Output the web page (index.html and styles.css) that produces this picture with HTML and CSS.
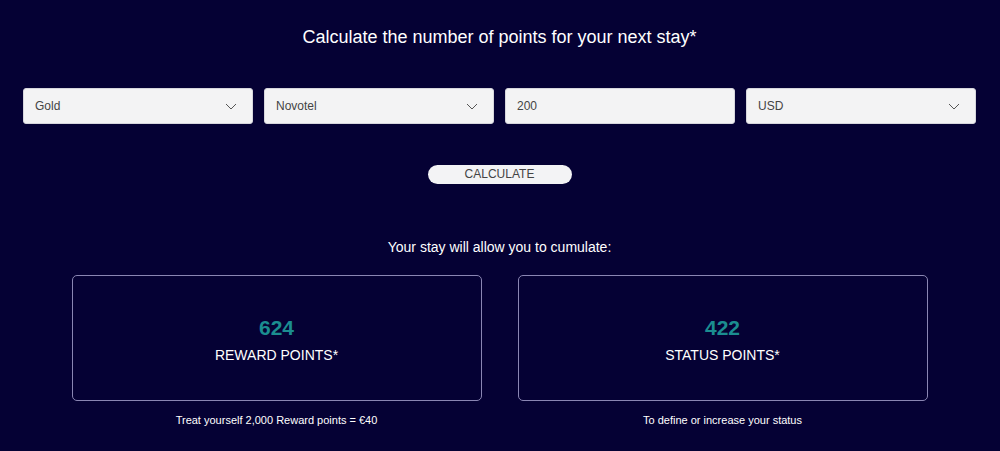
FILE: index.html
```html
<!DOCTYPE html>
<html lang="en">
<head>
    <meta charset="UTF-8">
    <meta name="viewport" content="width=device-width, initial-scale=1.0">
    <title>Points Calculator</title>
    <link rel="stylesheet" href="styles.css">
</head>
<body>
    <div class="calculator">
        <h1>Calculate the number of points for your next stay*</h1>

        <!-- Stay parameters -->
        <div class="fields">
            <div class="field select">
                <span>Gold</span>
                <svg class="chevron" width="12" height="7" viewBox="0 0 12 7"><path d="M1 1l5 5 5-5" fill="none" stroke="#555" stroke-width="1"/></svg>
            </div>
            <div class="field select">
                <span>Novotel</span>
                <svg class="chevron" width="12" height="7" viewBox="0 0 12 7"><path d="M1 1l5 5 5-5" fill="none" stroke="#555" stroke-width="1"/></svg>
            </div>
            <div class="field">
                <span>200</span>
            </div>
            <div class="field select">
                <span>USD</span>
                <svg class="chevron" width="12" height="7" viewBox="0 0 12 7"><path d="M1 1l5 5 5-5" fill="none" stroke="#555" stroke-width="1"/></svg>
            </div>
        </div>

        <div class="actions">
            <button class="calc-btn">CALCULATE</button>
        </div>

        <!-- Results -->
        <p class="intro">Your stay will allow you to cumulate:</p>
        <div class="results">
            <div class="result">
                <div class="card">
                    <div class="amount">624</div>
                    <div class="label">REWARD POINTS*</div>
                </div>
                <p class="note">Treat yourself 2,000 Reward points = €40</p>
            </div>
            <div class="result">
                <div class="card">
                    <div class="amount">422</div>
                    <div class="label">STATUS POINTS*</div>
                </div>
                <p class="note">To define or increase your status</p>
            </div>
        </div>
    </div>
</body>
</html>
```

FILE: styles.css
```css
/* Global Styles */
* { box-sizing: border-box; margin: 0; padding: 0; }
body {
    font-family: Arial, "Liberation Sans", sans-serif;
    background: #050134;
    color: #fff;
    height: 451px;
    overflow: hidden;
}

.calculator { padding: 26px 24px 0 23px; }

h1 {
    font-size: 18px;
    font-weight: normal;
    text-align: center;
    line-height: 22px;
}

.fields {
    display: grid;
    grid-template-columns: repeat(4, 1fr);
    gap: 11px;
    margin-top: 40px;
}
.field {
    height: 36px;
    background: #f3f3f4;
    border: 1px solid #d6d6dc;
    border-radius: 3px;
    color: #444;
    font-size: 12px;
    display: flex;
    align-items: center;
    justify-content: space-between;
    padding: 0 15px 0 11px;
}
.chevron { display: block; }

.actions { display: flex; justify-content: center; margin-top: 41px; }
.calc-btn {
    width: 144px;
    height: 19px;
    border: none;
    border-radius: 10px;
    background: #f3f3f5;
    color: #444;
    font-family: Arial, "Liberation Sans", sans-serif;
    font-size: 12px;
    line-height: 19px;
    cursor: pointer;
}

.intro {
    text-align: center;
    font-size: 14px;
    margin-top: 55px;
    line-height: 16px;
}

.results {
    display: flex;
    justify-content: center;
    gap: 36px;
    margin-top: 20px;
}
.result { width: 410px; }
.card {
    height: 126px;
    border: 1px solid #8a86b3;
    border-radius: 5px;
    display: flex;
    flex-direction: column;
    align-items: center;
    justify-content: center;
    padding-top: 3px;
}
.amount {
    color: #1b8d90;
    font-size: 21px;
    font-weight: bold;
    line-height: 24px;
}
.label {
    font-size: 14px;
    line-height: 18px;
    margin-top: 6px;
}
.note {
    text-align: center;
    font-size: 11px;
    margin-top: 13px;
}
```
